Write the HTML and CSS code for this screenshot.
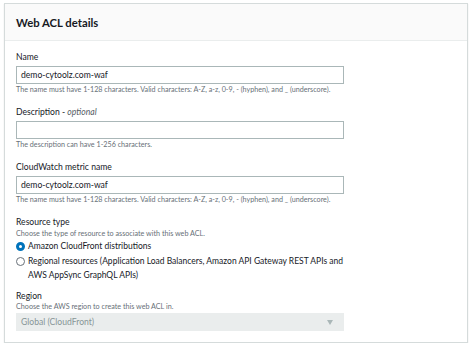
FILE: index.html
```html
<!DOCTYPE html>
<html>
<head>
<meta charset="utf-8">
<link rel="stylesheet" href="styles.css">
</head>
<body>
<div class="card">
  <div class="header"><h2>Web ACL details</h2></div>
  <div class="body">
    <div class="field">
      <div class="label">Name</div>
      <div class="input">demo-cytoolz.com-waf</div>
      <div class="hint">The name must have 1-128 characters. Valid characters: A-Z, a-z, 0-9, - (hyphen), and _ (underscore).</div>
    </div>
    <div class="field">
      <div class="label">Description - <i>optional</i></div>
      <div class="input"></div>
      <div class="hint">The description can have 1-256 characters.</div>
    </div>
    <div class="field">
      <div class="label">CloudWatch metric name</div>
      <div class="input">demo-cytoolz.com-waf</div>
      <div class="hint">The name must have 1-128 characters. Valid characters: A-Z, a-z, 0-9, - (hyphen), and _ (underscore).</div>
    </div>
    <div class="field radios">
      <div class="label">Resource type</div>
      <div class="hint top">Choose the type of resource to associate with this web ACL.</div>
      <div class="radio"><span class="dot on"></span><span>Amazon CloudFront distributions</span></div>
      <div class="radio"><span class="dot"></span><span>Regional resources (Application Load Balancers, Amazon API Gateway REST APIs and AWS AppSync GraphQL APIs)</span></div>
    </div>
    <div class="field">
      <div class="label">Region</div>
      <div class="hint top2">Choose the AWS region to create this web ACL in.</div>
      <div class="select"><span>Global (CloudFront)</span><span class="arrow"></span></div>
    </div>
  </div>
</div>
</body>
</html>
```
FILE: styles.css
```css
body {
  margin: 0;
  background: #fff;
  font-family: Lato, "Open Sans", sans-serif;
  color: #16191f;
}
.card {
  margin: 3px 6px 0 4px;
  border: 1px solid #d5dbdb;
  box-shadow: 0 1px 1px rgba(0,0,0,0.15);
  height: 340px;
  box-sizing: border-box;
}
.header {
  background: #fafafa;
  border-bottom: 1px solid #eaeded;
  height: 36px;
  display: flex;
  align-items: center;
  padding-left: 11px;
}
.header h2 {
  margin: 0;
  font-size: 11.3px;
  font-weight: 700;
}
.body {
  padding: 10px 11px 0 11px;
}
.field {
  margin-bottom: 11px;
}
.field.radios { margin-bottom: 8px; }
.label {
  font-size: 8.6px;
  line-height: 12px;
  margin-bottom: 3px;
  color: #16191f;
}
.label i { color: #545b64; }
.input {
  width: 328px;
  height: 18px;
  border: 1px solid #aab7b8;
  box-sizing: border-box;
  font-size: 8.6px;
  line-height: 16px;
  padding-left: 4px;
}
.hint {
  font-size: 7.2px;
  line-height: 11px;
  color: #687078;
}
.hint.top { line-height: 10px; margin-top: -2px; }
.hint.top2 { line-height: 10px; margin-top: -3px; }
.radio {
  display: flex;
  align-items: flex-start;
  gap: 3px;
  font-size: 8.5px;
  line-height: 14px;
  margin-bottom: 1px;
  width: 340px;
}
.dot {
  flex: none;
  width: 9px;
  height: 9px;
  border: 1px solid #687078;
  border-radius: 50%;
  box-sizing: border-box;
  margin-top: 2.5px;
}
.dot.on {
  border: 3px solid #0073bb;
}
.select {
  width: 328px;
  height: 18px;
  margin-top: 1px;
  background: #eaeded;
  display: flex;
  align-items: center;
  justify-content: space-between;
  box-sizing: border-box;
  padding: 0 11px 0 5px;
  font-size: 8.6px;
  color: #879596;
}
.arrow {
  width: 0;
  height: 0;
  border-left: 3px solid transparent;
  border-right: 3px solid transparent;
  border-top: 5px solid #aab7b8;
}
```
